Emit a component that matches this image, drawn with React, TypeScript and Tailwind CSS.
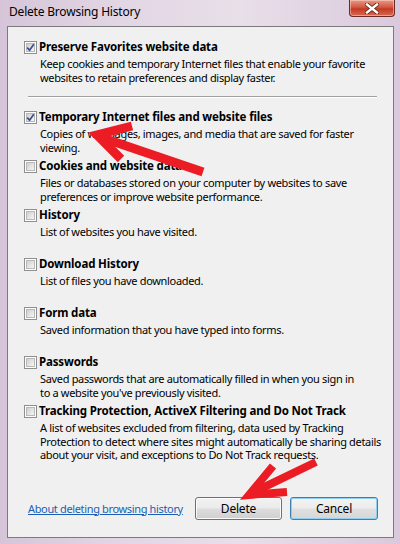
import React from "react";

type Item = { title: string; desc: string[]; checked?: boolean };

const items: Item[] = [
  {
    title: "Temporary Internet files and website files",
    desc: ["Copies of webpages, images, and media that are saved for faster", "viewing."],
    checked: true,
  },
  {
    title: "Cookies and website data",
    desc: ["Files or databases stored on your computer by websites to save", "preferences or improve website performance."],
  },
  { title: "History", desc: ["List of websites you have visited."] },
  { title: "Download History", desc: ["List of files you have downloaded."] },
  { title: "Form data", desc: ["Saved information that you have typed into forms."] },
  {
    title: "Passwords",
    desc: ["Saved passwords that are automatically filled in when you sign in", "to a website you've previously visited."],
  },
];

function CheckBox({ checked }: { checked?: boolean }) {
  return (
    <div className="w-[13px] h-[13px] shrink-0 border border-[#8e8f8f] bg-white p-[1px] mt-[1px]">
      <div className="w-full h-full bg-[linear-gradient(135deg,#cfcfcf,#f6f6f6)] border border-[#b8b8b8] relative">
        {checked && (
          <svg viewBox="0 0 9 9" className="absolute left-[-1px] top-[-1px] w-[9px] h-[9px]">
            <path d="M1.2 4.6 L3.6 7.2 L7.8 1.2" fill="none" stroke="#3b4f8c" strokeWidth="1.7" />
          </svg>
        )}
      </div>
    </div>
  );
}

function Row({ item, last }: { item: Item; last?: boolean }) {
  return (
    <div className={last ? "flex" : "flex h-[49px]"}>
      <div className="ml-[16px] pt-[0px]">
        <CheckBox checked={item.checked} />
      </div>
      <div className="ml-[2px] flex flex-col">
        <div className="h-[14px] leading-[14px] font-bold text-[11.5px] tracking-[-0.15px] text-black whitespace-nowrap">{item.title}</div>
        <div className="mt-[3px] pl-[1px] text-[11px] tracking-[-0.33px] leading-[13.5px] text-black">
          {item.desc.map((d, i) => (
            <div key={i} className="whitespace-nowrap">{d}</div>
          ))}
        </div>
      </div>
    </div>
  );
}

export default function App() {
  return (
    <div className="w-[400px] h-[544px] relative overflow-hidden bg-[linear-gradient(90deg,#d6c5d9_0%,#e2d6e4_30%,#e8dfe9_60%,#dac9dc_100%)] font-['Noto_Sans','Open_Sans',sans-serif]">
      <div className="h-[26px] flex items-start justify-between">
        <div className="pl-[9px] pt-[4px] text-[12px] leading-[16px] tracking-[-0.2px] text-black">Delete Browsing History</div>
        <div className="mr-[5px] w-[46px] h-[17px] rounded-b-[4px] border border-t-0 border-[#6b2a24] bg-[linear-gradient(180deg,#e59a88_0%,#d4583f_45%,#c23a24_55%,#d96a52_100%)] flex items-center justify-center shadow-[inset_0_0_0_1px_rgba(255,220,210,0.5)]">
          <svg viewBox="0 0 14 11" className="w-[14px] h-[11px]">
            <path d="M2 1.5 L12 9.5 M12 1.5 L2 9.5" stroke="#5a2019" strokeWidth="4" strokeLinecap="square" />
            <path d="M2 1.5 L12 9.5 M12 1.5 L2 9.5" stroke="#ffffff" strokeWidth="2.4" strokeLinecap="square" />
          </svg>
        </div>
      </div>

      <div className="ml-[7px] mr-[6px] h-[512px] border border-[#7b7b7b] bg-[#f0f0f0] flex flex-col pt-[13px] pb-[17px]">
        <Row item={{ title: "Preserve Favorites website data", desc: ["Keep cookies and temporary Internet files that enable your favorite", "websites to retain preferences and display faster."], checked: true }} />
        <div className="mt-[7px] mb-[13px] ml-[20px] w-[349px] h-[1px] bg-[#a0a0a0] shadow-[0_1px_0_#ffffff]" />
        {items.map((it) => (
          <Row key={it.title} item={it} />
        ))}
        <Row
          last
          item={{
            title: "Tracking Protection, ActiveX Filtering and Do Not Track",
            desc: [
              "A list of websites excluded from filtering, data used by Tracking",
              "Protection to detect where sites might automatically be sharing details",
              "about your visit, and exceptions to Do Not Track requests.",
            ],
          }}
        />
        <div className="mt-auto flex items-center pl-[20px] pr-[15px]">
          <a className="text-[11px] tracking-[-0.35px] leading-[14px] text-[#1a5fb4] underline whitespace-nowrap">About deleting browsing history</a>
          <div className="ml-auto flex gap-[8px]">
            <button className="w-[87px] h-[23px] rounded-[3px] border border-[#707070] bg-[linear-gradient(180deg,#f2f2f2_0%,#ebebeb_48%,#dddddd_52%,#cfcfcf_100%)] text-[12px] tracking-[-0.2px] text-black shadow-[inset_0_0_0_1px_#fbfbfb]">
              Delete
            </button>
            <button className="w-[88px] h-[23px] rounded-[3px] border border-[#3c7fb1] bg-[linear-gradient(180deg,#f4f4f4_0%,#ececec_48%,#e0e0e0_52%,#d6d6d6_100%)] text-[12px] tracking-[-0.2px] text-black shadow-[inset_0_0_0_1px_#8fd0f2]">
              Cancel
            </button>
          </div>
        </div>
      </div>

      <svg className="absolute inset-0 pointer-events-none" width="400" height="544" viewBox="0 0 400 544">
        <line x1="203" y1="172" x2="100" y2="137" stroke="#ec1c24" strokeWidth="9" />
        <polyline points="132,126 97,135 121,159" fill="none" stroke="#ec1c24" strokeWidth="9" strokeLinejoin="miter" />
        <line x1="316" y1="462" x2="252" y2="493" stroke="#ec1c24" strokeWidth="8" />
        <polyline points="273,466 249,495 287,492" fill="none" stroke="#ec1c24" strokeWidth="8" strokeLinejoin="miter" />
      </svg>
    </div>
  );
}
